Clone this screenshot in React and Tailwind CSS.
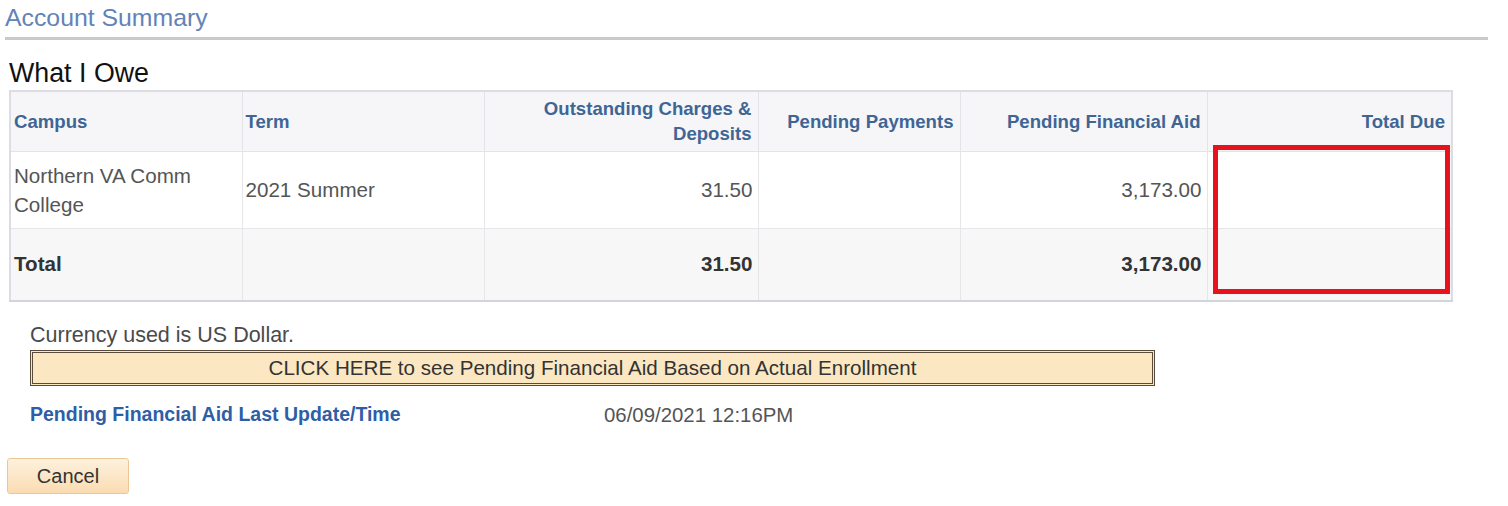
const rows = [
  { campus: 'Northern VA Comm College', term: '2021 Summer', charges: '31.50', payments: '', aid: '3,173.00', due: '' },
];

const columns = [
  { key: 'campus', label: 'Campus', width: 'w-[232px]', align: 'text-left' },
  { key: 'term', label: 'Term', width: 'w-[242px]', align: 'text-left' },
  { key: 'charges', label: 'Outstanding Charges & Deposits', width: 'w-[274px]', align: 'text-right' },
  { key: 'payments', label: 'Pending Payments', width: 'w-[202px]', align: 'text-right' },
  { key: 'aid', label: 'Pending Financial Aid', width: 'w-[247px]', align: 'text-right' },
  { key: 'due', label: 'Total Due', width: 'w-[245px]', align: 'text-right' },
];

const App = () => {
  return (
    <div className="w-[1508px] h-[506px] bg-white font-['Liberation_Sans',Arial,sans-serif] overflow-hidden">
      {/* Page title */}
      <div className="pl-[5px] pr-[20px]">
        <h1 className="h-[36px] leading-[36px] text-[24.8px] text-[#6283b8]">Account Summary</h1>
        <div className="h-[3px] bg-[#c9c9c9] mt-px" />
      </div>

      <div className="pl-[9px]">
        <h2 className="mt-[17px] h-[33px] leading-[33px] text-[26.8px] text-[#111]">What I Owe</h2>

        {/* Summary grid */}
        <div className="relative w-[1442px]">
          <table className="w-full table-fixed border-collapse border-2 border-[#dcdde4]">
            <thead>
              <tr className="h-[60px] bg-[#f6f6f8]">
                {columns.map((col) => (
                  <th
                    key={col.key}
                    className={`${col.width} ${col.align} pl-[3px] pr-[6px] align-middle border border-[#e3e3e8] text-[18.6px] leading-[25px] font-bold text-[#3f6595]`}
                  >
                    {col.key === 'charges' ? (
                      <>Outstanding Charges &amp;<br />Deposits</>
                    ) : col.label}
                  </th>
                ))}
              </tr>
            </thead>
            <tbody>
              {rows.map((row, i) => (
                <tr key={i} className="h-[77px] bg-white">
                  {columns.map((col) => (
                    <td
                      key={col.key}
                      className={`${col.align} pl-[3px] pr-[5px] align-middle border border-[#e6e6ea] text-[20.6px] leading-[29px] text-[#555]`}
                    >
                      {col.key === 'campus' ? (
                        <>Northern VA Comm<br />College</>
                      ) : row[col.key]}
                    </td>
                  ))}
                </tr>
              ))}
              <tr className="h-[73px] bg-[#f7f7f7] border-b-2 border-[#d4d5dc]">
                <td className="pl-[3px] border border-[#e6e6ea] text-[20.6px] font-bold text-[#333]">Total</td>
                <td className="border border-[#e6e6ea]" />
                <td className="pr-[5px] text-right border border-[#e6e6ea] text-[20.6px] font-bold text-[#333]">31.50</td>
                <td className="border border-[#e6e6ea]" />
                <td className="pr-[5px] text-right border border-[#e6e6ea] text-[20.6px] font-bold text-[#333]">3,173.00</td>
                <td className="border border-[#e6e6ea]" />
              </tr>
            </tbody>
          </table>

          {/* Highlight annotation around Total Due */}
          <div className="absolute left-[1204px] top-[55px] w-[237px] h-[149px] border-[5px] border-[#e8121e] pointer-events-none" />
        </div>
      </div>

      {/* Footer info */}
      <div className="pl-[30px]">
        <p className="mt-[20px] h-[26px] leading-[26px] text-[21.5px] text-[#4a4a4a]">Currency used is US Dollar.</p>
        <button className="mt-[2px] w-[1125px] h-[36px] bg-[#fbe8c3] border-[3px] border-double border-[#5a4b3b] text-[20.6px] text-[#333] text-center">
          CLICK HERE to see Pending Financial Aid Based on Actual Enrollment
        </button>
        <div className="mt-[17px] flex items-center h-[24px]">
          <span className="w-[574px] text-[19.5px] font-bold text-[#2d5ea6]">Pending Financial Aid Last Update/Time</span>
          <span className="text-[20.4px] text-[#555]">06/09/2021 12:16PM</span>
        </div>
      </div>

      <div className="pl-[7px] mt-[31px]">
        <button className="w-[122px] h-[36px] rounded-[3px] border border-[#ebc893] bg-gradient-to-b from-[#fdf1de] to-[#fbdcb2] text-[20px] text-[#333]">
          Cancel
        </button>
      </div>
    </div>
  );
};

export default App;
